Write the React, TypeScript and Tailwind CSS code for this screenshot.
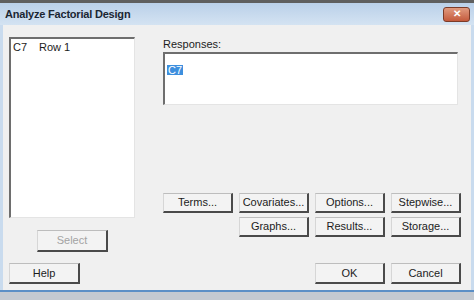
import React from 'react';

type BtnProps = { label: string; w?: string; h?: string; disabled?: boolean; className?: string };

const DlgButton: React.FC<BtnProps> = ({ label, w = 'w-[70px]', h = 'h-[20px]', disabled, className = '' }) => (
  <button
    className={`${w} ${h} ${className} flex items-center justify-center bg-[#f3f3f3] border-t border-l border-t-[#bdbdbd] border-l-[#d6d6d6] border-r-2 border-b-2 border-r-[#4a4a4a] border-b-[#4a4a4a] text-[11px] leading-none ${
      disabled ? 'text-[#a3a3a3]' : 'text-[#1c1c1c]'
    }`}
  >
    {label}
  </button>
);

const App: React.FC = () => {
  return (
    <div
      className="w-[474px] h-[300px] flex flex-col overflow-hidden bg-[#f0f0f0]"
      style={{ fontFamily: '"Liberation Sans", Arial, sans-serif' }}
    >
      {/* strip of the window behind */}
      <div className="h-[3px] bg-[#5f5f5f]" />

      {/* Title bar */}
      <div className="h-[22px] flex items-center justify-between pl-[5px] pr-[4px] bg-gradient-to-b from-[#bad0e9] to-[#d4e3f2]">
        <span className="text-[11px] font-bold text-[#1b2633] tracking-[-0.2px]">Analyze Factorial Design</span>
        <div className="w-[27px] h-[15px] rounded-[3px] border border-[#7c3b28] bg-gradient-to-b from-[#e09a7f] to-[#c45a3c] flex items-center justify-center">
          <span className="text-white text-[10px] font-bold leading-none">✕</span>
        </div>
      </div>

      {/* Body */}
      <div className="flex-1 flex flex-col bg-[#f0f0f0] border-l-[3px] border-r-[3px] border-[#c9dbee] pl-[6px] pr-[10px] pt-[12px]">
        <div className="flex">
          {/* Left column */}
          <div className="w-[126px] flex flex-col">
            <div className="h-[181px] bg-white border-t-2 border-l-2 border-t-[#6e6e6e] border-l-[#6e6e6e] border-r border-b border-r-[#e4e4e4] border-b-[#e4e4e4] px-[2px] pt-[2px]">
              <div className="flex text-[11px] leading-[13px] text-[#1c1c1c]">
                <span className="w-[26px]">C7</span>
                <span>Row 1</span>
              </div>
            </div>
            <DlgButton label="Select" w="w-[71px]" h="h-[22px]" disabled className="ml-[28px] mt-[12px]" />
          </div>

          {/* Right column */}
          <div className="ml-[28px] w-[298px] flex flex-col">
            <div className="h-[15px] text-[11px] leading-[14px] text-[#1c1c1c]">Responses:</div>
            <div className="w-[295px] h-[53px] bg-white border-t-2 border-l-2 border-t-[#6e6e6e] border-l-[#6e6e6e] border-r border-b border-r-[#e4e4e4] border-b-[#e4e4e4] pl-[2px] pt-[3px]">
              <span className="inline-block bg-[#3d8fde] text-white text-[11px] leading-[10px] px-[1px]">C7</span>
            </div>
            <div className="mt-[88px] grid grid-cols-[70px_70px_70px_70px] gap-x-[6px] gap-y-[4px]">
              <DlgButton label="Terms..." />
              <DlgButton label="Covariates..." />
              <DlgButton label="Options..." />
              <DlgButton label="Stepwise..." />
              <div />
              <DlgButton label="Graphs..." />
              <DlgButton label="Results..." />
              <DlgButton label="Storage..." />
            </div>
          </div>
        </div>

        {/* Bottom buttons */}
        <div className="mt-[11px] flex items-center">
          <DlgButton label="Help" w="w-[71px]" h="h-[21px]" />
          <div className="flex-1" />
          <DlgButton label="OK" h="h-[21px]" />
          <DlgButton label="Cancel" h="h-[21px]" className="ml-[6px]" />
        </div>
      </div>

      {/* Taskbar strip */}
      <div className="h-[10px] border-t-2 border-[#5b8fc6] bg-[#c3c9d1]" />
    </div>
  );
};

export default App;
